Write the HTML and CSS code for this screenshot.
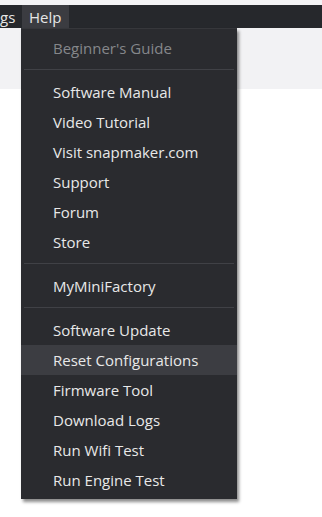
FILE: index.html
```html
<!DOCTYPE html>
<html lang="en">
<head>
  <meta charset="UTF-8" />
  <meta name="viewport" content="width=device-width, initial-scale=1.0" />
  <title>Help Menu</title>
  <link rel="stylesheet" href="styles.css">
</head>
<body>
  <div class="top-strip"></div>

  <!-- Application menu bar -->
  <div class="menubar">
    <span class="menubar-item cut">gs</span>
    <span class="menubar-item active">Help</span>
  </div>

  <div class="toolbar-band"></div>
  <div class="workspace"></div>

  <!-- Open Help dropdown -->
  <ul class="dropdown">
    <li class="item disabled">Beginner's Guide</li>
    <li class="separator"></li>
    <li class="item">Software Manual</li>
    <li class="item">Video Tutorial</li>
    <li class="item">Visit snapmaker.com</li>
    <li class="item">Support</li>
    <li class="item">Forum</li>
    <li class="item">Store</li>
    <li class="separator"></li>
    <li class="item">MyMiniFactory</li>
    <li class="separator"></li>
    <li class="item">Software Update</li>
    <li class="item hover">Reset Configurations</li>
    <li class="item">Firmware Tool</li>
    <li class="item">Download Logs</li>
    <li class="item">Run Wifi Test</li>
    <li class="item">Run Engine Test</li>
  </ul>
</body>
</html>
```

FILE: styles.css
```css
body {
  margin: 0;
  padding: 0;
  font-family: "Open Sans", "Noto Sans", sans-serif;
  background-color: #ffffff;
  position: relative;
  height: 517px;
  overflow: hidden;
}
.top-strip {
  height: 5px;
  background-color: #f3f3f5;
}
.menubar {
  display: flex;
  align-items: stretch;
  height: 23px;
  background-color: #26282c;
}
.menubar-item {
  color: #e6e6e6;
  font-size: 15px;
  line-height: 24px;
  padding: 0 7px;
}
.menubar-item.cut {
  padding: 0;
  width: 22px;
}
.menubar-item.active {
  background-color: #3b3c41;
  width: 33px;
}
.toolbar-band {
  height: 61px;
  background-color: #f2f2f4;
}
.dropdown {
  position: absolute;
  left: 21px;
  top: 28px;
  width: 216px;
  margin: 0;
  padding: 4px 0 4px;
  list-style: none;
  background-color: #2a2b2f;
  border-top: 1px solid #36373b;
  box-sizing: border-box;
  box-shadow: 2px 3px 3px rgba(0, 0, 0, 0.45);
}
.item {
  height: 30px;
  line-height: 30px;
  padding-left: 32px;
  font-size: 15px;
  color: #e8e8e8;
  cursor: pointer;
}
.item.disabled {
  color: #85878b;
}
.item.hover {
  background-color: #3c3d42;
}
.separator {
  height: 14px;
  position: relative;
}
.separator::after {
  content: "";
  position: absolute;
  left: 3px;
  right: 3px;
  top: 6px;
  height: 1px;
  background-color: #404146;
}
```
